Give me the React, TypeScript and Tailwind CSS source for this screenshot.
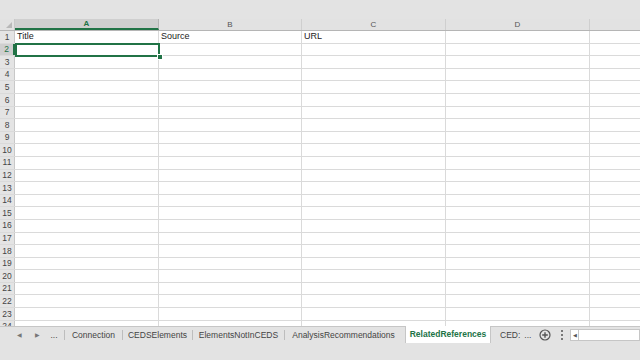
import React from "react";

const cols = [
  { l: "A", w: 144 },
  { l: "B", w: 143 },
  { l: "C", w: 144 },
  { l: "D", w: 144 },
  { l: "", w: 60 },
];

const rows = Array.from({ length: 24 }, (_, i) => i + 1);

const cellText: Record<string, string> = {
  "1-0": "Title",
  "1-1": "Source",
  "1-2": "URL",
};

const tabs = [
  { t: "Connection", w: 58 },
  { t: "CEDSElements", w: 70 },
  { t: "ElementsNotInCEDS", w: 92 },
  { t: "AnalysisRecommendations", w: 118 },
];

export default function App() {
  return (
    <div
      className="w-[640px] h-[360px] overflow-hidden bg-[#e3e3e3] flex flex-col"
      style={{ fontFamily: '"Liberation Sans", sans-serif' }}
    >
      <div className="h-[19px] shrink-0 bg-[#e3e3e3]" />
      {/* column header */}
      <div className="h-[12px] shrink-0 flex bg-[#e2e2e2] border-b border-[#b5b5b5]">
        <div className="w-[15px] shrink-0 relative border-r border-[#c8c8c8]">
          <div className="absolute right-[2px] bottom-[2px] w-0 h-0 border-l-[6px] border-l-transparent border-b-[6px] border-b-[#b8b8b8]" />
        </div>
        {cols.map((c, i) => (
          <div
            key={i}
            className={`shrink-0 flex items-center justify-center text-[8px] leading-none border-r ${
              i === 0
                ? "bg-[#cfcfcf] text-[#217346] font-bold border-[#b5b5b5] border-b-2 border-b-[#217346]"
                : "text-[#555] border-[#cfcfcf]"
            }`}
            style={{ width: c.w }}
          >
            {c.l}
          </div>
        ))}
      </div>
      {/* grid */}
      <div className="h-[295px] shrink-0 overflow-hidden bg-white relative">
        {rows.map((r) => (
          <div key={r} className="h-[12.6px] flex border-b border-[#dadada]">
            <div
              className={`w-[15px] shrink-0 flex items-center justify-center text-[8.5px] leading-none border-r ${
                r === 2
                  ? "bg-[#cfcfcf] text-[#217346] border-[#b5b5b5] border-r-2 border-r-[#217346]"
                  : "bg-[#e4e4e4] text-[#444] border-[#c8c8c8]"
              }`}
            >
              {r}
            </div>
            {cols.map((c, i) => (
              <div
                key={i}
                className="shrink-0 border-r border-[#dadada] flex items-center pl-[2px] text-[9px] leading-none text-[#222] whitespace-nowrap overflow-hidden"
                style={{ width: c.w }}
              >
                {cellText[`${r}-${i}`] ?? ""}
              </div>
            ))}
          </div>
        ))}
        {/* selection */}
        <div className="absolute left-[15px] top-[12px] w-[145px] h-[13.6px] border-2 border-[#217346]" />
        <div className="absolute left-[157px] top-[23px] w-[4px] h-[4px] bg-[#217346] border border-white box-content" />
      </div>
      {/* tab bar */}
      <div className="h-[17px] shrink-0 flex items-stretch bg-[#e3e3e3] border-t border-[#c6c6c6] text-[8.5px] text-[#444] leading-none">
        <div className="w-[13px]" />
        <div className="w-[12px] flex items-center justify-center text-[#777] text-[6px]">◀</div>
        <div className="w-[6px]" />
        <div className="w-[12px] flex items-center justify-center text-[#777] text-[6px]">▶</div>
        <div className="w-[4px]" />
        <div className="w-[14px] flex items-center justify-center">...</div>
        <div className="w-[3px]" />
        {tabs.map((t) => (
          <div
            key={t.t}
            className="shrink-0 flex items-center justify-center border-l border-[#bdbdbd] my-[3px] whitespace-nowrap"
            style={{ width: t.w }}
          >
            {t.t}
          </div>
        ))}
        <div className="w-[4px]" />
        <div className="w-[84px] shrink-0 flex items-center justify-center bg-white -mt-[1px] text-[#217346] font-bold whitespace-nowrap shadow-[1px_0_0_#c6c6c6,-1px_0_0_#c6c6c6]">
          RelatedReferences
        </div>
        <div className="flex items-center pl-[10px] whitespace-nowrap">CED:</div>
        <div className="flex items-center pl-[4px]">...</div>
        <div className="w-[8px]" />
        <div className="flex items-center">
          <svg width="12" height="12" viewBox="0 0 12 12">
            <circle cx="6" cy="6" r="5" fill="none" stroke="#555" strokeWidth="1.2" />
            <path d="M6 3.2v5.6M3.2 6h5.6" stroke="#555" strokeWidth="1.4" />
          </svg>
        </div>
        <div className="w-[9px] flex items-center justify-center flex-col gap-[2px] ml-[6px]">
          <div className="w-[2px] h-[2px] bg-[#777]" />
          <div className="w-[2px] h-[2px] bg-[#777]" />
          <div className="w-[2px] h-[2px] bg-[#777]" />
        </div>
        <div className="w-[4px]" />
        <div className="flex-1 flex items-center my-[2px] bg-white border border-[#c6c6c6]">
          <div className="w-[8px] h-full flex items-center justify-center border-r border-[#c6c6c6] text-[5px] text-[#555]">◀</div>
        </div>
      </div>
      <div className="flex-1 bg-[#e3e3e3]" />
    </div>
  );
}
